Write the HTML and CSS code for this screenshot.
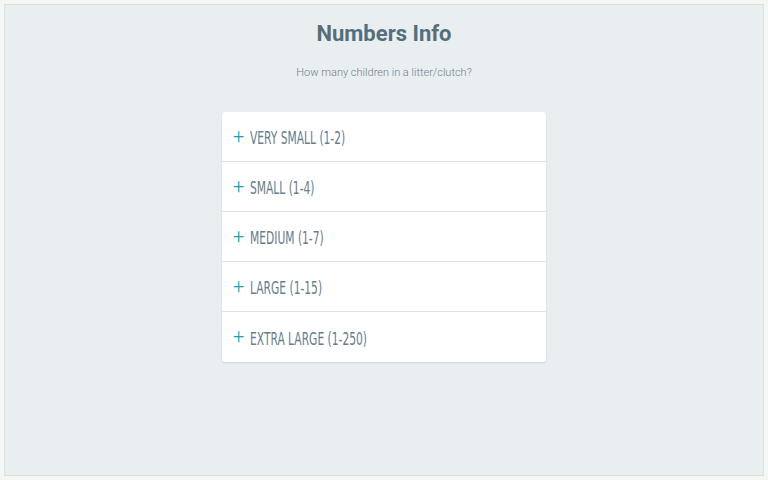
FILE: index.html
```html
<!DOCTYPE html>
<html lang="en">
<head>
    <meta charset="UTF-8">
    <title>Numbers Info</title>
    <link rel="stylesheet" href="styles.css">
</head>
<body>
    <div class="frame">
        <h1 class="title">Numbers Info</h1>
        <p class="subtitle">How many children in a litter/clutch?</p>

        <ul class="accordion">
            <li class="item"><span class="plus">+</span><span class="label">VERY SMALL (1-2)</span></li>
            <li class="item"><span class="plus">+</span><span class="label">SMALL (1-4)</span></li>
            <li class="item"><span class="plus">+</span><span class="label">MEDIUM (1-7)</span></li>
            <li class="item"><span class="plus">+</span><span class="label">LARGE (1-15)</span></li>
            <li class="item"><span class="plus">+</span><span class="label">EXTRA LARGE (1-250)</span></li>
        </ul>
    </div>
</body>
</html>
```

FILE: styles.css
```css
body {
    margin: 0;
    padding: 4px;
    background-color: #f6f6f5;
    font-family: Roboto, "Liberation Sans", sans-serif;
}
.frame {
    height: 472px;
    box-sizing: border-box;
    background-color: #e9eef1;
    border: 1px solid #dcdfe1;
    padding-top: 16px;
}
.title {
    margin: 0;
    text-align: center;
    font-size: 22px;
    font-weight: bold;
    color: #546e7a;
    line-height: 26px;
}
.subtitle {
    margin: 19px 0 0;
    text-align: center;
    font-size: 11px;
    font-weight: 300;
    color: #6f7f88;
    line-height: 14px;
}
.accordion {
    list-style: none;
    width: 324px;
    margin: 32px auto 0;
    padding: 0;
    background-color: #fff;
    border-radius: 3px;
    box-shadow: 0 1px 2px rgba(0,0,0,0.12);
}
.item {
    height: 49px;
    display: flex;
    align-items: center;
    padding-left: 11px;
    border-bottom: 1px solid #dfe3e6;
    color: #687d88;
}
.item:last-child {
    border-bottom: none;
    height: 50px;
}
.plus {
    width: 17px;
    font-size: 20px;
    font-weight: 300;
    color: #1aa2b4;
    margin-top: -2px;
}
/* узкий шрифт: сжимаем по ширине */
.label {
    display: inline-block;
    padding-top: 3px;
    font-family: "DejaVu Sans Condensed", "DejaVu Sans", sans-serif;
    font-size: 17px;
    transform: scaleX(0.7);
    transform-origin: left center;
    white-space: nowrap;
}
```
